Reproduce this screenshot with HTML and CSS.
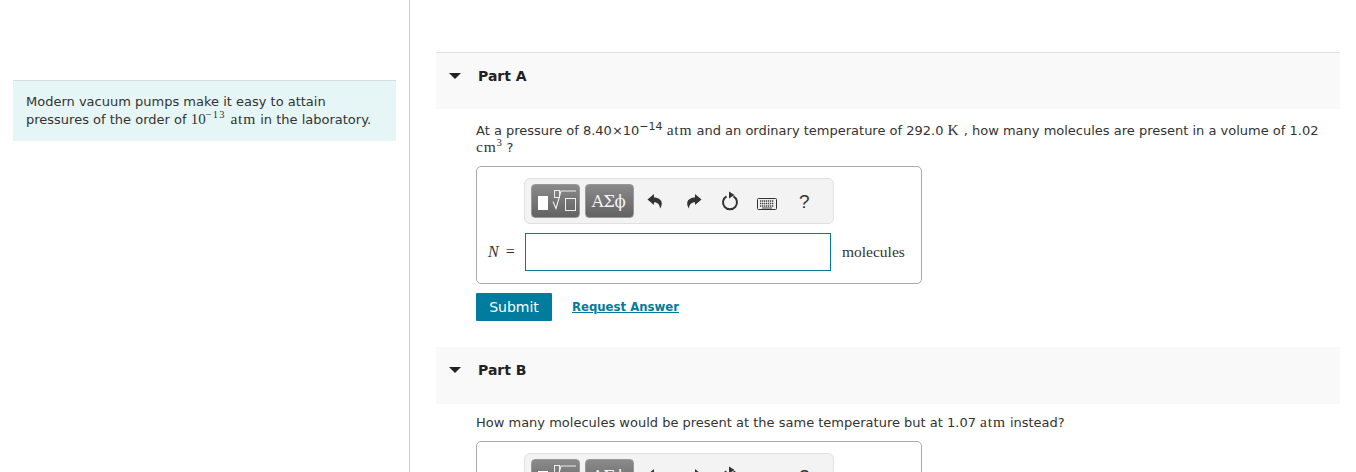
FILE: index.html
```html
<!DOCTYPE html>
<html lang="en">
<head>
<meta charset="utf-8">
<title>Part A</title>
<link rel="stylesheet" href="styles.css">
</head>
<body>
<svg class="defs" width="0" height="0" aria-hidden="true">
  <symbol id="i-undo" viewBox="0 0 16 16"><path d="M0.5 6.500 7 1V4.500C11.500 4.500 14.800 7 14.800 10.500 14.800 12.500 14 14.300 13 15.500 12.800 11.500 10.500 9.300 7 9.300V12z" fill="#333"/></symbol>
  <symbol id="i-redo" viewBox="0 0 16 16"><path d="M15.500 6.500 9 1V4.500C4.500 4.500 1.200 7 1.200 10.500 1.200 12.500 2 14.300 3 15.500 3.200 11.500 5.500 9.300 9 9.300V12z" fill="#333"/></symbol>
  <symbol id="i-reset" viewBox="0 0 18 20"><path d="M5.500 5.300a7 7 0 1 0 7 0" fill="none" stroke="#333" stroke-width="2"/><path d="M8 .5 13.500 4 8 7.500z" fill="#333"/></symbol>
  <symbol id="i-kbd" viewBox="0 0 20 12"><rect x=".5" y=".5" width="19" height="11" rx="1" fill="#eee" stroke="#333"/><path d="M3 3h14M3 5.500h14M3 8h14" stroke="#444" stroke-width="1.300" stroke-dasharray="1.300 .7"/><path d="M5 10h10" stroke="#444" stroke-width="1"/></symbol>
  <symbol id="i-templates" viewBox="0 0 48 30"><rect x="6" y="10" width="10" height="14" fill="#fff"/><rect x="22.500" y="4.500" width="5" height="7" fill="none" stroke="#eee"/><path d="M21 15.500l3 7 5-17.500H44" fill="none" stroke="#eee" stroke-width="1.100"/><rect x="33.500" y="12.500" width="10" height="12" fill="none" stroke="#eee"/></symbol>
</svg>
<div class="page">
  <aside class="side">
    <div class="intro">
      Modern vacuum pumps make it easy to attain pressures of the order of <span class="math">10<sup class="intro-sup">−13</sup> <span class="unit-abbr">atm</span></span> in the laboratory.
    </div>
  </aside>
  <main class="content">
    <section class="part part-a">
      <header class="part-head"><span class="caret"></span><h2>Part A</h2></header>
      <div class="part-body">
        <p class="question">At a pressure of 8.40×10<sup class="big-sup">−14</sup> <span class="math unit-abbr">atm</span> and an ordinary temperature of 292.0 <span class="math unit-abbr">K</span> , how many molecules are present in a volume of 1.02 <span class="math unit-abbr">cm<sup>3</sup></span> ?</p>
        <div class="answer-box">
          <div class="toolbar">
            <span class="tool-btn tool-tpl"><svg width="48" height="30"><use href="#i-templates"/></svg></span>
            <span class="tool-btn tool-sym">ΑΣϕ</span>
            <span class="tool-icon icon-undo"><svg width="16" height="16"><use href="#i-undo"/></svg></span>
            <span class="tool-icon icon-redo"><svg width="16" height="16"><use href="#i-redo"/></svg></span>
            <span class="tool-icon icon-reset"><svg width="18" height="20"><use href="#i-reset"/></svg></span>
            <span class="tool-icon icon-kbd"><svg width="20" height="12"><use href="#i-kbd"/></svg></span>
            <span class="tool-icon icon-help">?</span>
          </div>
          <div class="answer-row">
            <span class="math label"><i>N</i> =</span>
            <span class="answer-input"></span>
            <span class="math unit">molecules</span>
          </div>
        </div>
        <div class="actions">
          <button class="submit" type="button">Submit</button>
          <a class="request" href="#">Request Answer</a>
        </div>
      </div>
    </section>
    <section class="part part-b">
      <header class="part-head"><span class="caret"></span><h2>Part B</h2></header>
      <div class="part-body">
        <p class="question">How many molecules would be present at the same temperature but at 1.07 <span class="math unit-abbr">atm</span> instead?</p>
        <div class="answer-box">
          <div class="toolbar">
            <span class="tool-btn tool-tpl"><svg width="48" height="30"><use href="#i-templates"/></svg></span>
            <span class="tool-btn tool-sym">ΑΣϕ</span>
            <span class="tool-icon icon-undo"><svg width="16" height="16"><use href="#i-undo"/></svg></span>
            <span class="tool-icon icon-redo"><svg width="16" height="16"><use href="#i-redo"/></svg></span>
            <span class="tool-icon icon-reset"><svg width="18" height="20"><use href="#i-reset"/></svg></span>
            <span class="tool-icon icon-kbd"><svg width="20" height="12"><use href="#i-kbd"/></svg></span>
            <span class="tool-icon icon-help">?</span>
          </div>
        </div>
      </div>
    </section>
  </main>
</div>
</body>
</html>
```

FILE: styles.css
```css
* { box-sizing: border-box; }
html, body { margin: 0; height: 472px; overflow: hidden; background: #fff; }
body { font-family: "DejaVu Sans", sans-serif; font-size: 13px; color: #333; }
.defs { position: absolute; }
.page { display: flex; height: 472px; overflow: hidden; }
.side { width: 410px; flex: none; padding: 80px 13px 0; border-right: 1px solid #c5cdd6; }
.intro { height: 61px; padding: 12px 13px 0; width: 383px; background: #e6f6f6; border-top: 1px solid #d5dde0; line-height: 18px; }
.math { font-family: "Liberation Serif", "DejaVu Serif", serif; font-size: 15px; line-height: 1; }
.unit-abbr { letter-spacing: .8px; font-size: 15.5px; }
sup { font-size: 70%; line-height: 0; vertical-align: baseline; position: relative; top: -6px; letter-spacing: .5px; }
.intro-sup { letter-spacing: 1.2px; margin-right: 1px; }
.big-sup { font-size: 11px; font-family: "DejaVu Sans", sans-serif; top: -5px; letter-spacing: 0; }
.content { flex: 1; padding: 52px 16px 0 26px; min-width: 0; }
.part-head { height: 57px; background: #f9f9f9; display: flex; align-items: center; padding-left: 13px; padding-bottom: 10px; gap: 17px; }
.part-a .part-head { border-top: 1px solid #e0e0e0; }
.part-b .part-head { margin-top: 26px; padding-bottom: 11px; }
.caret { width: 0; height: 0; border-left: 6px solid transparent; border-right: 6px solid transparent; border-top: 6px solid #222; }
h2 { margin: 0; font-size: 14px; font-weight: 700; color: #222; }
.part-body { padding: 0 0 0 40px; }
.question { margin: 0; padding-top: 13px; line-height: 17px; width: 860px; }
.part-b .question { padding-top: 10px; }
.answer-box { margin-top: 10px; width: 446px; height: 118px; border: 1px solid #aaa; border-radius: 5px; background: #fff; padding: 11px 0 0 47px; }
.toolbar { width: 310px; height: 46px; background: #f3f3f3; border: 1px solid #e0e0e0; border-radius: 6px; display: flex; align-items: flex-start; padding: 5px 0 0 6px; gap: 5px; position: relative; }
.tool-btn { height: 34px; border: 1px solid #999; border-radius: 4px; background: linear-gradient(#8a8a8a, #626262); color: #f4f4f4; display: flex; align-items: center; justify-content: center; flex: none; overflow: hidden; }
.tool-tpl { width: 49px; justify-content: flex-start; }
.tool-tpl svg { flex: none; }
.tool-sym { width: 49px; padding-right: 2px; font-family: "DejaVu Serif", "Liberation Serif", serif; font-size: 16.5px; letter-spacing: -.5px; }
.tool-icon { position: absolute; display: flex; }
.icon-undo { left: 122px; top: 14px; }
.icon-redo { left: 161px; top: 14px; }
.icon-reset { left: 196px; top: 12px; }
.icon-kbd { left: 232px; top: 19px; }
.icon-help { left: 274px; top: 12px; font-size: 19px; line-height: 22px; color: #333; font-family: "Liberation Sans", sans-serif; }
.answer-row { display: flex; align-items: center; margin: 9px 0 0 -36px; height: 38px; }
.label { width: 37px; font-size: 16px; word-spacing: 3px; }
.answer-input { width: 306px; height: 38px; border: 1px solid #007c9e; background: #fff; }
.unit { margin-left: 11px; font-size: 15.5px; }
.actions { display: flex; align-items: center; margin-top: 9px; gap: 20px; }
.submit { width: 76px; height: 28px; background: #007c9e; color: #fff; border: 0; border-radius: 1px; font: 14px "DejaVu Sans", sans-serif; padding: 0; }
.request { font-size: 11.7px; font-weight: 700; color: #007c9e; text-decoration: underline; }
```
